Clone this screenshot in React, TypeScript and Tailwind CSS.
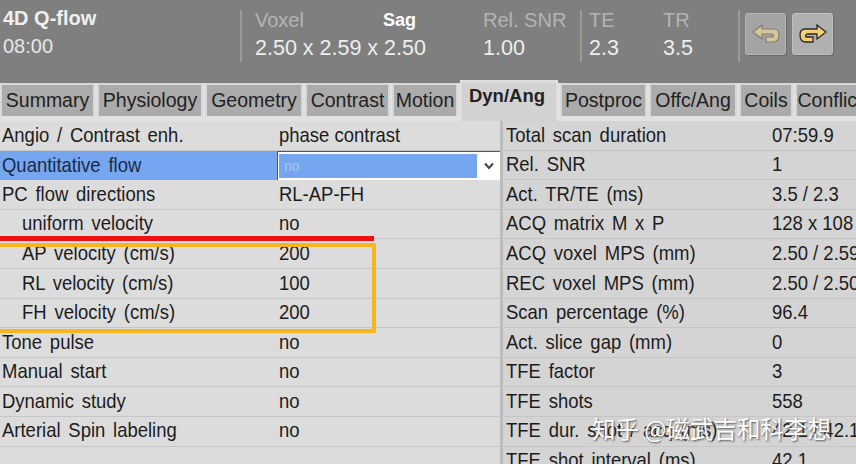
const font = { fontFamily: '"Liberation Sans", Arial, sans-serif' };

const tabs: [string, number][] = [
  ["Summary", 95], ["Physiology", 106], ["Geometry", 98], ["Contrast", 85], ["Motion", 66],
  ["Dyn/Ang", 98], ["Postproc", 87], ["Offc/Ang", 88], ["Coils", 54], ["Conflict", 70],
];

const left: [string, string, boolean?][] = [
  ["Angio / Contrast enh.", "phase contrast"],
  ["Quantitative  flow", "no"],
  ["PC flow directions", "RL-AP-FH"],
  ["uniform velocity", "no", true],
  ["AP velocity (cm/s)", "200", true],
  ["RL velocity (cm/s)", "100", true],
  ["FH velocity (cm/s)", "200", true],
  ["Tone pulse", "no"],
  ["Manual start", "no"],
  ["Dynamic study", "no"],
  ["Arterial Spin labeling", "no"],
];

const right: [string, string][] = [
  ["Total scan duration", "07:59.9"],
  ["Rel. SNR", "1"],
  ["Act. TR/TE (ms)", "3.5 / 2.3"],
  ["ACQ matrix M x P", "128 x 108"],
  ["ACQ voxel MPS (mm)", "2.50 / 2.59"],
  ["REC voxel MPS (mm)", "2.50 / 2.50"],
  ["Scan percentage (%)", "96.4"],
  ["Act. slice gap (mm)", "0"],
  ["TFE factor", "3"],
  ["TFE shots", "558"],
  ["TFE dur. shot / acq (ms)", "42.1 / 42.1"],
  ["TFE shot interval (ms)", "42.1"],
];

function Stat({ label, value, w }: { label: string; value: string; w: string }) {
  return (
    <div className={`flex flex-col shrink-0 ${w}`}>
      <div className="h-[29px] text-[20px] leading-[30px] whitespace-nowrap text-[#b4b4b4]">{label}</div>
      <div className="h-[29px] text-[21.5px] leading-[28px] whitespace-nowrap text-[#eeeeee]">{value}</div>
    </div>
  );
}

function Row({ a, b, indent, valueW }: { a: string; b: string; indent?: boolean; valueW: string }) {
  return (
    <div className="flex h-[29.6px] items-center pb-[2px] border-b border-[#c6c6c6] text-[21px] text-[#1c1c1c] whitespace-nowrap overflow-hidden">
      <div className={`${valueW} shrink-0 ${indent ? "pl-[22px]" : "pl-[2px]"}`}>
        <span className="inline-block origin-left scale-x-[0.88] [word-spacing:3px]">{a}</span>
      </div>
      <span className="inline-block origin-left scale-x-[0.88]">{b}</span>
    </div>
  );
}

export default function App() {
  return (
    <div className="relative w-[856px] h-[464px] overflow-hidden bg-[#dcdcdc]" style={font}>
      <div className="h-[81px] bg-[#7f7f7f] flex">
        <div className="w-[240px] shrink-0 pl-[3px] pt-[3px]">
          <div className="h-[29px] text-[20px] leading-[30px] font-bold text-[#f0f0f0]">4D Q-flow</div>
          <div className="h-[29px] text-[20px] leading-[28px] text-[#e6e6e6]">08:00</div>
        </div>
        <div className="w-[2px] h-[52px] mt-[10px] bg-[#999999]" />
        <div className="flex pt-[5px] pl-[13px]">
          <Stat label="Voxel" value="2.50 x 2.59 x 2.50" w="w-[128px]" />
          <div className="w-[100px] shrink-0 h-[30px] text-[18px] leading-[30px] font-bold text-white">Sag</div>
          <Stat label="Rel. SNR" value="1.00" w="w-[97px]" />
        </div>
        <div className="w-[2px] h-[52px] mt-[10px] bg-[#999999]" />
        <div className="flex pt-[5px] pl-[7px]">
          <Stat label="TE" value="2.3" w="w-[74px]" />
          <Stat label="TR" value="3.5" w="w-[75px]" />
        </div>
        <div className="w-[2px] h-[52px] mt-[10px] bg-[#999999]" />
        <div className="flex gap-[6px] pl-[5px] pt-[13px]">
          <button className="w-[41px] h-[42px] rounded-[3px] bg-[#a4a4a4] border border-[#b6b6b6] shadow-[1px_1px_0_#6a6a6a] flex items-center justify-center">
            <svg width="28" height="20" viewBox="0 0 28 20">
              <path d="M1 8 L10 1 V5 H22 Q27 5 27 11 Q27 18 21 18 H14 V13 H21 Q22 11 20 10 H10 V15 Z" fill="#d6c49a" stroke="#857f70" strokeWidth="1.2" />
            </svg>
          </button>
          <button className="w-[41px] h-[42px] rounded-[3px] bg-[#b0b0b0] border border-[#c0c0c0] shadow-[1px_1px_0_#6a6a6a] flex items-center justify-center">
            <svg width="28" height="20" viewBox="0 0 28 20">
              <path d="M27 8 L18 1 V5 H6 Q1 5 1 11 Q1 18 7 18 H14 V13 H7 Q6 11 8 10 H18 V15 Z" fill="#f4cf78" stroke="#2a2a2a" strokeWidth="1.3" />
            </svg>
          </button>
        </div>
      </div>

      <div className="relative h-[40px] bg-[#e2e2e2] flex items-end gap-[2px] border-t-[2px] border-[#7f7f7f]">
        {tabs.map(([t, w]) => {
          const active = t === "Dyn/Ang";
          return (
            <div
              key={t}
              style={{ width: w }}
              className={`shrink-0 overflow-hidden whitespace-nowrap text-[#222222] flex justify-center ${
                active
                  ? "h-[41px] -mt-[3px] pr-[4px] bg-[#d2d2d2] border-t-[3px] border-x-[2px] border-[#dedede] font-bold text-[18.5px] text-[#111111] leading-[26px]"
                  : "h-[35px] mb-[3px] bg-[#ababab] border-2 border-[#d8d8d8] border-b-[#e0e0e0] text-[19.5px] leading-[31px]"
              }`}
            >
              {t}
            </div>
          );
        })}
      </div>

      <div className="flex bg-[#dcdcdc]">
        <div className="w-[500px] shrink-0">
          {left.map(([a, b, ind]) =>
            a.startsWith("Quant") ? (
              <div key={a} className="flex h-[29.6px] text-[21px] text-[#1c2a44] whitespace-nowrap">
                <div className="w-[277px] shrink-0 pl-[2px] pb-[2px] bg-[#75a6ef] flex items-center">
                  <span className="inline-block origin-left scale-x-[0.88] [word-spacing:3px]">{a}</span>
                </div>
                <div className="flex-1 bg-white border-t border-l border-[#555555] flex items-center pr-[3px]">
                  <div className="w-[198px] h-[24px] ml-[1px] bg-[#75a6ef] text-[#a9c6f2] text-[14px] leading-[24px] pl-[5px]">no</div>
                  <svg className="ml-[7px]" width="10" height="8" viewBox="0 0 10 8">
                    <path d="M1 1.5 L5 6 L9 1.5" fill="none" stroke="#444444" strokeWidth="2" />
                  </svg>
                </div>
              </div>
            ) : (
              <Row key={a} a={a} b={b} indent={ind} valueW="w-[279px]" />
            )
          )}
        </div>
        <div className="w-[3px] shrink-0 bg-[#bcbcbc]" />
        <div className="flex-1 pl-[1px] bg-[#d4d4d4] h-[343px] overflow-hidden">
          {right.map(([a, b]) => (
            <Row key={a} a={a} b={b} valueW="w-[268px]" />
          ))}
        </div>
      </div>

      <div className="absolute left-0 top-[236px] w-[374px] h-[5px] bg-[#ee1111]" />
      <div className="absolute left-[-4px] top-[243px] w-[380px] h-[90px] border-[4px] border-[#f6b71e]" />

      <div
        className="absolute left-[592px] top-[409px] text-[23.5px] leading-[38px] text-white whitespace-nowrap [text-shadow:1px_1px_2px_#555555]"
        style={{ fontFamily: '"Noto Sans CJK SC", sans-serif' }}
      >
        知乎 @磁武吉和科李想
      </div>
    </div>
  );
}
